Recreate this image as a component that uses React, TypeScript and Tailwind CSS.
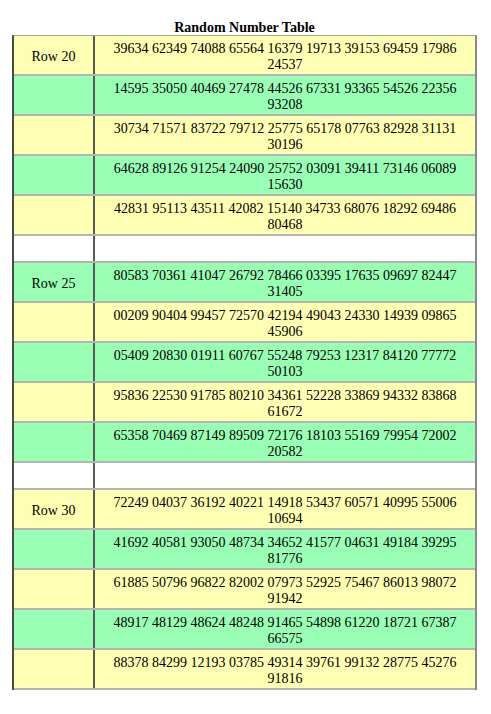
import React from "react";

type Row = { label?: string; nums: string; tone: "y" | "g" };

const groups: Row[][] = [
  [
    { label: "Row 20", tone: "y", nums: "39634 62349 74088 65564 16379 19713 39153 69459 17986 24537" },
    { tone: "g", nums: "14595 35050 40469 27478 44526 67331 93365 54526 22356 93208" },
    { tone: "y", nums: "30734 71571 83722 79712 25775 65178 07763 82928 31131 30196" },
    { tone: "g", nums: "64628 89126 91254 24090 25752 03091 39411 73146 06089 15630" },
    { tone: "y", nums: "42831 95113 43511 42082 15140 34733 68076 18292 69486 80468" },
  ],
  [
    { label: "Row 25", tone: "g", nums: "80583 70361 41047 26792 78466 03395 17635 09697 82447 31405" },
    { tone: "y", nums: "00209 90404 99457 72570 42194 49043 24330 14939 09865 45906" },
    { tone: "g", nums: "05409 20830 01911 60767 55248 79253 12317 84120 77772 50103" },
    { tone: "y", nums: "95836 22530 91785 80210 34361 52228 33869 94332 83868 61672" },
    { tone: "g", nums: "65358 70469 87149 89509 72176 18103 55169 79954 72002 20582" },
  ],
  [
    { label: "Row 30", tone: "y", nums: "72249 04037 36192 40221 14918 53437 60571 40995 55006 10694" },
    { tone: "g", nums: "41692 40581 93050 48734 34652 41577 04631 49184 39295 81776" },
    { tone: "y", nums: "61885 50796 96822 82002 07973 52925 75467 86013 98072 91942" },
    { tone: "g", nums: "48917 48129 48624 48248 91465 54898 61220 18721 67387 66575" },
    { tone: "y", nums: "88378 84299 12193 03785 49314 39761 99132 28775 45276 91816" },
  ],
];

function DataRow({ row }: { row: Row }) {
  const bg = row.tone === "y" ? "bg-[#ffffb4]" : "bg-[#99ffb4]";
  return (
    <div className={`flex h-[40px] border-b-2 border-[#b4b4b4] ${bg}`}>
      <div className="flex w-[81px] shrink-0 items-center justify-center border-r-2 border-[#5a5a5a] pt-[3px]">
        {row.label}
      </div>
      <div className="flex flex-1 items-center justify-center px-2 pt-[3px] text-center leading-[16px]">
        {row.nums}
      </div>
    </div>
  );
}

function BlankRow() {
  return (
    <div className="flex h-[27px] border-b-2 border-[#b4b4b4] bg-white">
      <div className="w-[81px] shrink-0 border-r-2 border-[#5a5a5a]" />
      <div className="flex-1" />
    </div>
  );
}

export default function App() {
  return (
    <div
      className="min-h-[714px] w-[491px] bg-white text-[14px] text-black"
      style={{ fontFamily: '"Liberation Serif", "Times New Roman", serif' }}
    >
      <div className="w-[476px] pt-[20px] pl-[13px] text-center font-bold leading-[15px]">
        Random Number Table
      </div>
      <div className="ml-[12px] w-[465px] border-t border-l-2 border-r-2 border-t-[#a0a0a0] border-l-[#4a4a4a] border-r-[#8a8a8a]">
        {groups.map((g, gi) => (
          <React.Fragment key={gi}>
            {gi > 0 && <BlankRow />}
            {g.map((r, ri) => (
              <DataRow key={ri} row={r} />
            ))}
          </React.Fragment>
        ))}
      </div>
    </div>
  );
}
